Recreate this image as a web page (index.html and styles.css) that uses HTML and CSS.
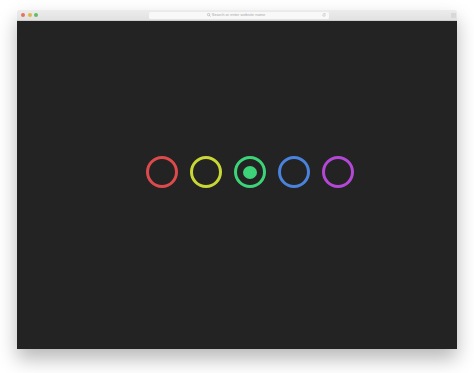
FILE: index.html
```html
<!DOCTYPE html>
<html>
<head>
<meta charset="utf-8">
<link rel="stylesheet" href="styles.css">
</head>
<body>
<div class="window">
  <div class="titlebar">
    <div class="lights">
      <span class="light red"></span>
      <span class="light yellow"></span>
      <span class="light green"></span>
    </div>
    <div class="address">
      <span class="addr-text">
        <svg class="mag" viewBox="0 0 10 10" width="4" height="4"><circle cx="4" cy="4" r="3" fill="none" stroke="#999" stroke-width="1.2"/><line x1="6.2" y1="6.2" x2="9" y2="9" stroke="#999" stroke-width="1.2"/></svg>
        <span class="label">Search or enter website name</span>
      </span>
      <svg class="reload" viewBox="0 0 10 10" width="4" height="4"><path d="M8 5a3 3 0 1 1-1-2.2" fill="none" stroke="#aaa" stroke-width="1.2"/><path d="M6 1.5h2v2" fill="none" stroke="#aaa" stroke-width="1.2"/></svg>
    </div>
    <div class="plus"></div>
  </div>
  <div class="content">
    <div class="radios">
      <span class="radio c-red"></span>
      <span class="radio c-yellow"></span>
      <span class="radio c-green checked"></span>
      <span class="radio c-blue"></span>
      <span class="radio c-purple"></span>
    </div>
  </div>
</div>
</body>
</html>
```
FILE: styles.css
```css
html, body {
  margin: 0;
  padding: 0;
  background: #ffffff;
  font-family: "Liberation Sans", Arial, sans-serif;
}
body {
  width: 474px;
  height: 373px;
  overflow: hidden;
}
.window {
  margin: 10px 0 0 17px;
  width: 440px;
  box-shadow: 0 10px 18px rgba(0, 0, 0, 0.28);
}
.titlebar {
  height: 11px;
  background: linear-gradient(#ececec, #e2e2e2);
  border-bottom: 1px solid #cfcfcf;
  display: flex;
  align-items: center;
  position: relative;
  box-sizing: border-box;
  border-radius: 2px 2px 0 0;
}
.lights {
  display: flex;
  gap: 2.5px;
  margin-left: 4px;
}
.light {
  width: 4px;
  height: 4px;
  border-radius: 50%;
}
.light.red { background: #e5735f; }
.light.yellow { background: #e0b84a; }
.light.green { background: #5fbf5f; }
.address {
  margin-left: 111px;
  width: 180px;
  height: 7px;
  background: #f8f8f8;
  border-radius: 1.5px;
  display: flex;
  align-items: center;
  justify-content: center;
  position: relative;
}
.addr-text {
  display: flex;
  align-items: center;
  gap: 1px;
  margin-left: -6px;
}
.label {
  font-size: 4px;
  color: #a8a8a8;
  line-height: 1;
  white-space: nowrap;
}
.reload {
  position: absolute;
  right: 3px;
  top: 1.5px;
}
.plus {
  margin-left: auto;
  margin-right: 1px;
  width: 5px;
  height: 5px;
  background: #d8d8d8;
}
.content {
  height: 328px;
  background: #232323;
  display: flex;
  justify-content: center;
  padding-top: 135px;
  padding-left: 25px;
  box-sizing: border-box;
}
.radios {
  display: flex;
  gap: 12px;
  height: 32px;
}
.radio {
  width: 32px;
  height: 32px;
  border-radius: 50%;
  border: 3px solid;
  box-sizing: border-box;
  display: flex;
  align-items: center;
  justify-content: center;
}
.c-red { border-color: #dd4a4c; }
.c-yellow { border-color: #c9d736; }
.c-green { border-color: #3dd479; }
.c-blue { border-color: #4a82dc; }
.c-purple { border-color: #b448d6; }
.checked::after {
  content: "";
  width: 14px;
  height: 13px;
  border-radius: 50%;
  background: #3dd479;
}
```
